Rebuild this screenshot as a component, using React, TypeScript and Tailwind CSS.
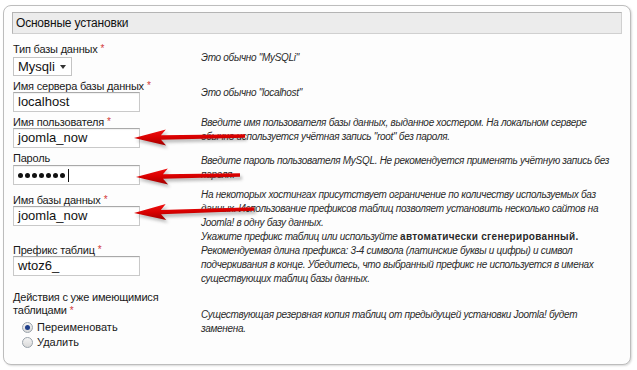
import React from "react"

const Req = () => <span className="text-[#d23a3a] text-[10px] align-top ml-[3px]">*</span>

function Label({ children, req = true }: { children: React.ReactNode; req?: boolean }) {
  return (
    <div className="text-[11px] leading-[12px] text-[#1a1a1a] tracking-[-0.2px]">
      {children}
      {req && <Req />}
    </div>
  )
}

function Field({ value, className = "" }: { value: React.ReactNode; className?: string }) {
  return (
    <div
      className={`w-[127px] h-[20px] border border-[#c9c9c9] border-t-[#a9a9a9] bg-white pl-[4px] flex items-center text-[13px] text-[#111] shadow-[inset_0_1px_1px_rgba(0,0,0,0.06)] ${className}`}
    >
      {value}
    </div>
  )
}

function Radio({ checked, label }: { checked?: boolean; label: string }) {
  return (
    <div className="flex items-center gap-[4px] h-[15px] text-[11px] text-[#1a1a1a]">
      <span className="w-[11px] h-[11px] rounded-full border border-[#9aa3ab] bg-gradient-to-b from-[#f4f4f4] to-[#d9d9d9] flex items-center justify-center">
        {checked && <span className="w-[5px] h-[5px] rounded-full bg-[#1f3f8a]" />}
      </span>
      {label}
    </div>
  )
}

function Arrow({ x1, y1, x2, y2 }: { x1: number; y1: number; x2: number; y2: number }) {
  // tip at (x1,y1), tail at (x2,y2)
  const len = Math.hypot(x2 - x1, y2 - y1)
  const ang = (Math.atan2(y2 - y1, x2 - x1) * 180) / Math.PI
  const pts = `0,0 32,-8 27,-2.2 ${len},-1.8 ${len},1.8 27,2.2 32,8`
  return (
    <g transform={`translate(${x1} ${y1}) rotate(${ang})`}>
      <g transform="translate(2 3)" opacity="0.35" filter="url(#blur)">
        <polygon points={pts} fill="#444" />
      </g>
      <polygon points={pts} fill="url(#red)" />
    </g>
  )
}

export default function App() {
  const hint = "text-[10px] leading-[14px] italic text-[#2a2a2a] tracking-[-0.3px] whitespace-nowrap"
  return (
    <div className="w-[637px] h-[370px] bg-white relative" style={{ fontFamily: '"Liberation Sans", Arial, sans-serif' }}>
      <div className="absolute left-[3px] top-[5px] w-[628px] h-[360px] rounded-[8px] border border-[#bdbdbd] bg-[#fdfdfd] shadow-[1px_1px_2px_rgba(0,0,0,0.15)] px-[8px] pt-[6px]">
        <div className="h-[22px] bg-[#ececec] border border-[#b4b4b4] border-b-[#d0d0d0] border-r-[#d0d0d0] flex items-center pl-[3px] text-[12px] text-[#111] tracking-[-0.2px]">
          Основные установки
        </div>
        <div className="flex pl-[1px]">
          <div className="w-[188px] shrink-0 flex flex-col pt-[9px]">
            <Label>Тип базы данных</Label>
            <div className="mt-[2px] w-[59px] h-[19px] border border-[#c4c4c4] bg-white flex items-center justify-between pl-[4px] pr-[5px] text-[13px] text-[#111]">
              Mysqli
              <span className="w-0 h-0 border-l-[3.5px] border-r-[3.5px] border-t-[4px] border-l-transparent border-r-transparent border-t-[#333]" />
            </div>
            <div className="mt-[4px]"><Label>Имя сервера базы данных</Label></div>
            <Field value="localhost" />
            <div className="mt-[4px]"><Label>Имя пользователя</Label></div>
            <Field value="joomla_now" />
            <div className="mt-[4px]"><Label req={false}>Пароль</Label></div>
            <Field
              className="mt-[1px]"
              value={
                <span className="flex items-center gap-[2px]">
                  {Array.from({ length: 7 }).map((_, i) => (
                    <span key={i} className="w-[5px] h-[5px] rounded-full bg-[#111]" />
                  ))}
                  <span className="w-[1px] h-[13px] bg-[#111] ml-[1px]" />
                </span>
              }
            />
            <div className="mt-[9px]"><Label>Имя базы данных</Label></div>
            <Field value="joomla_now" />
            <div className="mt-[18px]"><Label>Префикс таблиц</Label></div>
            <Field value="wtoz6_" />
            <div className="mt-[15px] text-[11px] leading-[13px] text-[#1a1a1a] tracking-[-0.2px]">
              Действия с уже имеющимися
              <br />
              таблицами<Req />
            </div>
            <div className="mt-[3px] pl-[9px] flex flex-col">
              <Radio checked label="Переименовать" />
              <Radio label="Удалить" />
            </div>
          </div>
          <div className="flex-1 flex flex-col pt-[17px]">
            <p className={hint}>Это обычно "MySQLi"</p>
            <p className={`${hint} mt-[21px]`}>Это обычно "localhost"</p>
            <p className={`${hint} mt-[16px]`}>
              Введите имя пользователя базы данных, выданное хостером. На локальном сервере
              <br />
              обычно используется учётная запись "root" без пароля.
            </p>
            <p className={`${hint} mt-[10px]`}>
              Введите пароль пользователя MySQL. Не рекомендуется применять учётную запись без
              <br />
              пароля.
            </p>
            <p className={`${hint} mt-[6px]`}>
              На некоторых хостингах присутствует ограничение по количеству используемых баз
              <br />
              данных. Использование префиксов таблиц позволяет установить несколько сайтов на
              <br />
              Joomla! в одну базу данных.
            </p>
            <p className={hint}>
              Укажите префикс таблиц или используйте <b className="not-italic font-bold tracking-[0.3px]">автоматически сгенерированный.</b>
              <br />
              Рекомендуемая длина префикса: 3-4 символа (латинские буквы и цифры) и символ
              <br />
              подчеркивания в конце. Убедитесь, что выбранный префикс не используется в именах
              <br />
              существующих таблиц базы данных.
            </p>
            <p className={`${hint} mt-[22px]`}>
              Существующая резервная копия таблиц от предыдущей установки Joomla! будет
              <br />
              заменена.
            </p>
          </div>
        </div>
      </div>
      <svg className="absolute inset-0 pointer-events-none" width="637" height="370">
        <defs>
          <linearGradient id="red" x1="0" y1="0" x2="0" y2="1">
            <stop offset="0" stopColor="#f01010" />
            <stop offset="0.5" stopColor="#d80000" />
            <stop offset="1" stopColor="#a00000" />
          </linearGradient>
          <filter id="blur" x="-10%" y="-100%" width="120%" height="300%">
            <feGaussianBlur stdDeviation="1.5" />
          </filter>
        </defs>
        <Arrow x1={134} y1={138} x2={245} y2={136} />
        <Arrow x1={136} y1={177} x2={240} y2={175} />
        <Arrow x1={134} y1={213} x2={254} y2={209} />
      </svg>
    </div>
  )
}
